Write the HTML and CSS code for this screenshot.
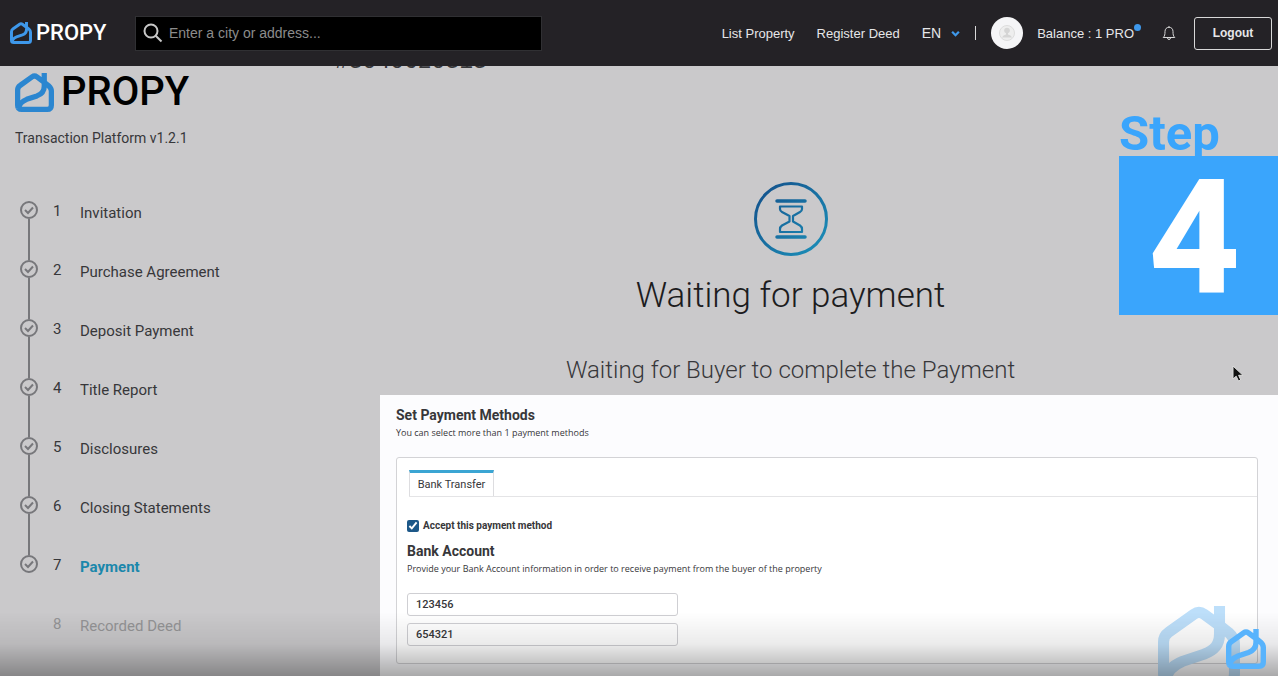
FILE: index.html
```
<!DOCTYPE html>
<html lang="en">
<head>
<meta charset="utf-8" />
<title>Propy - Payment</title>
<link rel="stylesheet" href="styles.css">
</head>
<body>
<svg class="defs" aria-hidden="true">
<symbol id="house" viewBox="0 0 40 40">
<path d="M30 0V13.500C30 19 27.500 21.500 22.500 23.500L12 27C7 29 4 32 3.500 37M2.700 33V17.500Q2.700 14.500 5.200 12.800L17.500 4Q20 2.200 22.500 4L30 9.500L34.500 13Q37.300 15.500 37.300 18.500V33Q37.300 37.300 33 37.300H7Q2.700 37.300 2.700 33Z" />
</symbol>
</svg>
<header class="topbar">
<a class="brand brand-small" href="#"><svg class="house"><use href="#house" /></svg>PROPY</a>
<form class="search">
<svg viewBox="0 0 20 20"><circle cx="8" cy="8" r="6.500" /><path d="M12.700 12.700L18.500 18.500" /></svg>
<input type="text" aria-label="Search" placeholder="Enter a city or address..." />
</form>
<nav class="menu">
<a href="#">List Property</a>
<a href="#">Register Deed</a>
<button class="lang" type="button">EN <svg viewBox="0 0 8 6"><path d="M1 1.500L4 4.500L7 1.500" /></svg></button>
<span class="sep"></span>
<svg class="avatar" viewBox="0 0 32 32"><circle cx="16" cy="16" r="16" fill="#f5f5f7" /><circle cx="16" cy="16" r="7.500" fill="#eee" stroke="#ddd" /><circle cx="16" cy="13.500" r="2.800" fill="#d5d5d5" /><path d="M11 20.500Q12 18 15 17.500V16H17V17.500Q20 18 21 20.500Z" fill="#d5d5d5" /></svg>
<span class="balance">Balance : 1 PRO<i class="dot"></i></span>
<button class="bell" type="button" aria-label="Notifications"><svg viewBox="0 0 14 16"><path d="M1.200 12.500H12.800C11.200 11 11 9.500 11 6.500C11 4 9.500 2.300 7 2.300S3 4 3 6.500C3 9.500 2.800 11 1.200 12.500ZM7 1V2M5.500 13Q5.700 14.500 7 14.500T8.500 13" /></svg></button>
<button class="logout" type="button">Logout</button>
</nav>
</header>
<div class="page">
<span class="deal-id">#3040620313</span>
<aside class="sidebar">
<a class="brand" href="#"><svg class="house"><use href="#house" /></svg>PROPY</a>
<p class="version">Transaction Platform v1.2.1</p>
<ol class="steps">
<li class="done"><svg class="check" viewBox="0 0 18 18"><circle cx="9" cy="9" r="8" /><path d="M5 9L8 12L13 6.500" /></svg><span class="num">1</span><span>Invitation</span></li>
<li class="done"><svg class="check" viewBox="0 0 18 18"><circle cx="9" cy="9" r="8" /><path d="M5 9L8 12L13 6.500" /></svg><span class="num">2</span><span>Purchase Agreement</span></li>
<li class="done"><svg class="check" viewBox="0 0 18 18"><circle cx="9" cy="9" r="8" /><path d="M5 9L8 12L13 6.500" /></svg><span class="num">3</span><span>Deposit Payment</span></li>
<li class="done"><svg class="check" viewBox="0 0 18 18"><circle cx="9" cy="9" r="8" /><path d="M5 9L8 12L13 6.500" /></svg><span class="num">4</span><span>Title Report</span></li>
<li class="done"><svg class="check" viewBox="0 0 18 18"><circle cx="9" cy="9" r="8" /><path d="M5 9L8 12L13 6.500" /></svg><span class="num">5</span><span>Disclosures</span></li>
<li class="done"><svg class="check" viewBox="0 0 18 18"><circle cx="9" cy="9" r="8" /><path d="M5 9L8 12L13 6.500" /></svg><span class="num">6</span><span>Closing Statements</span></li>
<li class="current"><svg class="check" viewBox="0 0 18 18"><circle cx="9" cy="9" r="8" /><path d="M5 9L8 12L13 6.500" /></svg><span class="num">7</span><span class="name">Payment</span></li>
<li class="next"><span class="check"></span><span class="num">8</span><span>Recorded Deed</span></li>
</ol>
</aside>
<main class="main">
<section class="status">
<svg class="hourglass" viewBox="0 0 74 74">
<defs><linearGradient id="blue" gradientUnits="userSpaceOnUse" x1="10" y1="10" x2="64" y2="64"><stop offset="0" stop-color="#14568f" /><stop offset="1" stop-color="#1b8ab5" /></linearGradient></defs>
<g fill="none" stroke="url(#blue)" stroke-linejoin="round" stroke-linecap="round">
<circle cx="37" cy="37" r="35.500" stroke-width="3" />
<path stroke-width="3.500" d="M23 19H51.010M23 55H51.010" />
<path stroke-width="2.200" d="M26 24.500H48V27Q48 29 46 30L39 34V39.500L46 43.500Q48 45 48 47V50H26V47Q26 45 28 43.500L35.500 39.500V34L28 30Q26 29 26 27Z" />
</g>
</svg>
<h1>Waiting for payment</h1>
<p>Waiting for Buyer to complete the Payment</p>
</section>
<section class="panel">
<h2>Set Payment Methods</h2>
<p>You can select more than 1 payment methods</p>
<form class="methods">
<div class="tabs"><button class="tab" type="button">Bank Transfer</button></div>
<label class="accept"><input type="checkbox" checked />Accept this payment method</label>
<h2>Bank Account</h2>
<p>Provide your Bank Account information in order to receive payment from the buyer of the property</p>
<input class="field" type="text" aria-label="Account number" value="123456" />
<input class="field" type="text" aria-label="Routing number" value="654321" />
</form>
</section>
</main>
</div>
<svg class="house watermark"><use href="#house" /></svg>
<div class="shade"></div>
<svg class="house corner"><use href="#house" /></svg>
<div class="step-badge"><span>Step</span><strong>4</strong></div>
<svg class="cursor" viewBox="0 0 12 18"><path d="M1 1V14L4.200 11.200L6.500 16L8.800 15L6.600 10.300H11Z" /></svg>
</body>
</html>
```
FILE: styles.css
```
* { box-sizing: border-box; }
body {
margin: 0;
min-height: 100vh;
overflow: hidden;
background: #cac9cb;
color: #37373a;
font-family: Roboto, "Liberation Sans", sans-serif; }
h1, h2, p, ol { margin: 0; padding: 0; }
a { color: inherit; text-decoration: none; }
button, input { font: inherit; color: inherit; }
button { padding: 0; border: 0; background: none; }
.defs { position: absolute; width: 0; height: 0; }
.house {
fill: none;
stroke: #2b86d0;
stroke-width: 5.4; }

/* header */
.topbar {
position: relative;
z-index: 2;
display: flex;
align-items: center;
height: 66px;
padding: 0 6px 0 10px;
background: #242226;
color: #e6e6e8;
font: 13px "Liberation Sans", sans-serif; }
.brand {
display: flex;
align-items: center;
gap: 7px;
color: #000;
font: 500 40px/40px Roboto, sans-serif; }
.brand .house { width: 39px; height: 39px; }
.brand-small {
gap: 4px;
width: 125px;
color: #fff;
font-size: 22px; }
.brand-small .house { width: 22px; height: 22px; stroke: #3e98ea; }
.search {
display: flex;
align-items: center;
gap: 6px;
width: 407px;
height: 35px;
padding-left: 7px;
border: 1px solid #303033;
background: #000; }
.search svg {
width: 20px;
height: 20px;
fill: none;
stroke: #c8c8c8;
stroke-width: 2; }
.search input {
flex: 1;
border: 0;
outline: none;
padding: 0;
background: none;
font-size: 14px; }
.search input::placeholder { color: #8c8c8c; }
.menu {
display: flex;
align-items: center;
margin-left: auto; }
.menu > a { margin-right: 22px; }
.lang {
display: flex;
align-items: center;
gap: 10px;
font-size: 14px; }
.lang svg {
width: 9px;
height: 7px;
fill: none;
stroke: #3e98ea;
stroke-width: 2; }
.sep {
width: 1px;
height: 14px;
margin: 0 15px;
background: #d8d8d8; }
.avatar { width: 32px; height: 32px; margin-right: 14px; }
.balance { display: flex; }
.dot {
width: 7px;
height: 7px;
margin-top: -2px;
border-radius: 50%;
background: #3e98ea; }
.bell { margin: 0 18px 0 21px; }
.bell svg {
display: block;
width: 14px;
height: 16px;
fill: none;
stroke: #d8d8d8; }
.logout {
width: 78px;
height: 33px;
border: 1px solid #d8d8d8;
border-radius: 3px;
font-size: 12px;
font-weight: bold; }

/* page */
.page {
position: relative;
display: grid;
grid-template-columns: 303px 1fr; }
.deal-id {
position: absolute;
left: 335px;
top: -17px;
font: 23px/26px "Liberation Mono", monospace; }
.sidebar { padding: 6px 0 0 15px; }
.version {
margin-top: 16px;
font-size: 14px;
line-height: 20px; }
.steps {
margin-top: 53px;
padding-left: 5px;
list-style: none; }
.steps li {
position: relative;
display: flex;
align-items: flex-start;
height: 59px;
font-size: 15px;
line-height: 24px; }
.check {
width: 18px;
height: 18px;
margin-right: 14px;
fill: none;
stroke: #77777b;
stroke-width: 2; }
.done::after {
content: "";
position: absolute;
left: 8px;
top: 18px;
width: 2px;
height: 41px;
background: #77777b; }
.num {
width: 28px;
padding-left: 1px;
line-height: 20px; }
.current .name { color: #1b87ab; font-weight: bold; }
.next { color: #949496; }
.status {
padding-top: 116px;
text-align: center; }
.hourglass { display: block; width: 74px; height: 74px; margin: 0 auto; }
.status h1 {
margin-top: 16px;
color: #1c1c1e;
font-size: 35px;
font-weight: 300;
line-height: 48px; }
.status p {
margin-top: 34px;
font-size: 24px;
font-weight: 300;
line-height: 32px; }

/* payment panel */
.panel {
margin: 9px 0 0 77px;
padding: 12px 20px 30px 16px;
background: #fcfcfe; }
.panel h2 {
font-size: 14px;
font-weight: 700;
line-height: 16px; }
.panel p {
margin-top: 4px;
font-family: "Open Sans", Roboto, sans-serif;
font-size: 9px;
font-weight: 500;
line-height: 12px; }
.methods {
margin-top: 18px;
padding: 12px 0 17px 10px;
border: 1px solid #d3d3d6;
border-radius: 3px;
background: #fff; }
.tabs {
display: flex;
margin-left: 2px;
border-bottom: 1px solid #e4e4e6; }
.tab {
width: 85px;
height: 26px;
border: 1px solid #dddde0;
border-top: 3px solid #3ba5d3;
border-bottom: 0;
font-size: 11px; }
.accept {
display: flex;
align-items: center;
gap: 4px;
margin: 22px 0 11px;
font-size: 10px;
font-weight: 700;
line-height: 13px; }
.accept input {
width: 12px;
height: 12px;
margin: 0;
accent-color: #1d5888; }
.field {
display: block;
width: 271px;
height: 23px;
margin-top: 7px;
padding: 0 8px;
border: 1px solid #cfcfd3;
border-radius: 3px;
background: #fff;
font-size: 11px;
font-weight: 500; }
.methods p + .field { margin-top: 18px; }

/* things that float over the page */
.shade {
position: fixed;
left: 0;
right: 0;
bottom: 0;
height: 64px;
background: linear-gradient(rgba(0, 0, 0, 0), rgba(0, 0, 0, 0.08) 50%, rgba(0, 0, 0, 0.33));
pointer-events: none; }
.watermark {
position: fixed;
right: 38px;
bottom: -12px;
width: 82px;
height: 82px;
stroke: #bddffa; }
.corner {
position: fixed;
right: 12px;
bottom: 7px;
width: 40px;
height: 40px;
stroke: #58b3fc; }
.step-badge {
position: fixed;
right: 0;
top: 110px;
width: 159px;
color: #3aa5fc;
font-weight: 700; }
.step-badge span {
display: block;
height: 46px;
font-size: 49px;
line-height: 48px; }
.step-badge strong {
display: block;
height: 159px;
padding-right: 8px;
background: #3aa5fc;
color: #fff;
font-size: 160px;
font-weight: 800;
line-height: 166px;
text-align: center; }
.cursor {
position: fixed;
right: 34px;
top: 365px;
width: 12px;
height: 18px;
fill: #111;
stroke: #ddd; }
```
